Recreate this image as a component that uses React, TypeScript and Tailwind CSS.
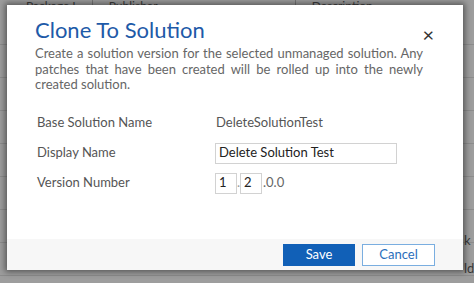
import React from "react";

const rows = [14, 45, 76, 107, 138, 169, 200, 231, 262];

const App: React.FC = () => {
  return (
    <div className="relative w-[474px] h-[283px] overflow-hidden bg-[#9d9d9d] font-['Lato',sans-serif]">
      {/* page behind the dialog */}
      <div className="flex h-[12px] items-start gap-4 pl-[26px] text-[12px] leading-none text-[#3c3c3c]">
        <span>Package I</span>
        <span className="w-px h-[10px] bg-[#777]" />
        <span className="w-[170px]">Publisher</span>
        <span className="w-px h-[10px] bg-[#777]" />
        <span>Description</span>
      </div>
      {rows.map((y) => (
        <div key={y} className="h-[33px] border-b border-[#8c8c8c]" />
      ))}
      <div className="absolute left-[464px] top-[234px] whitespace-nowrap text-[13px] leading-none text-[#3a3a3a]">k N</div>
      <div className="absolute left-[464px] top-[262px] whitespace-nowrap text-[13px] leading-none text-[#3a3a3a]">ld</div>

      {/* dialog */}
      <div className="absolute left-[7px] top-[5px] flex h-[265px] w-[456px] flex-col bg-white shadow-[0_0_6px_2px_rgba(0,0,0,0.45)]">
        <div className="flex-1 px-7 pt-[11px]">
          <div className="flex items-start justify-between">
            <h1 className="text-[22px] leading-[28px] text-[#1e5aa8]">Clone To Solution</h1>
            <button className="mt-[8px] mr-[1px] text-[20px] leading-none text-[#333]">×</button>
          </div>
          <p className="mt-[2px] w-[388px] text-justify text-[13px] leading-[15.5px] text-[#666]">
            Create a solution version for the selected unmanaged solution. Any patches that have been created will be rolled up into the newly created solution.
          </p>

          <div className="mt-[20px] flex flex-col gap-[9px] pl-[2px] text-[13px] text-[#555]">
            <div className="flex h-[21px] items-center">
              <span className="w-[179px]">Base Solution Name</span>
              <span>DeleteSolutionTest</span>
            </div>
            <div className="flex h-[21px] items-center">
              <span className="w-[178px]">Display Name</span>
              <div className="flex h-[21px] w-[182px] items-center border border-[#d2d2d2] px-[3px] text-[#222]">
                Delete Solution Test
              </div>
            </div>
            <div className="flex h-[21px] items-center">
              <span className="w-[178px]">Version Number</span>
              <div className="flex items-center text-[#222]">
                <div className="flex h-[21px] w-[22px] items-center border border-[#d2d2d2] px-[3px]">1</div>
                <span className="w-[3px] text-center text-[#999]">.</span>
                <div className="flex h-[21px] w-[22px] items-center border border-[#d2d2d2] px-[3px]">2</div>
                <span className="ml-[1px] text-[#666]">.0.0</span>
              </div>
            </div>
          </div>
        </div>

        <div className="flex h-[31px] items-center justify-end gap-[7px] bg-[#f7f7f7] pr-[28px]">
          <button className="h-[22px] w-[72px] bg-[#1160b7] text-[13px] text-white">Save</button>
          <button className="h-[22px] w-[73px] border border-[#7aaee0] bg-white text-[13px] text-[#2a6ebb]">Cancel</button>
        </div>
      </div>
    </div>
  );
};

export default App;
